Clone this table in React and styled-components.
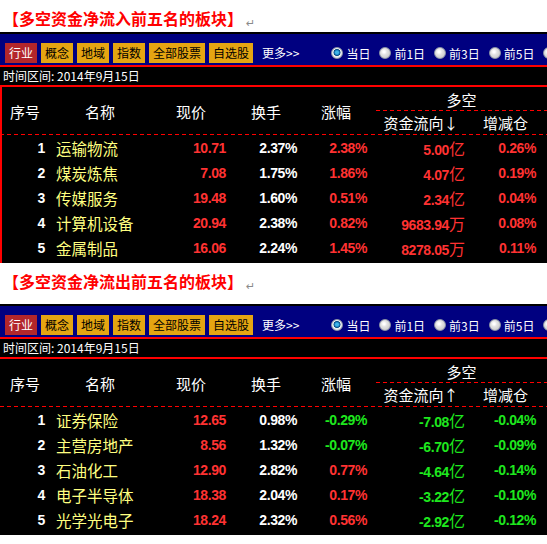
import React from "react";
import styled, { createGlobalStyle } from "styled-components";

// 行情数据
const inflow = [
  { no: 1, name: "运输物流", price: "10.71", turn: "2.37%", rise: "2.38%", flow: "5.00", unit: "亿", pos: "0.26%" },
  { no: 2, name: "煤炭炼焦", price: "7.08", turn: "1.75%", rise: "1.86%", flow: "4.07", unit: "亿", pos: "0.19%" },
  { no: 3, name: "传媒服务", price: "19.48", turn: "1.60%", rise: "0.51%", flow: "2.34", unit: "亿", pos: "0.04%" },
  { no: 4, name: "计算机设备", price: "20.94", turn: "2.38%", rise: "0.82%", flow: "9683.94", unit: "万", pos: "0.08%" },
  { no: 5, name: "金属制品", price: "16.06", turn: "2.24%", rise: "1.45%", flow: "8278.05", unit: "万", pos: "0.11%" },
];

const outflow = [
  { no: 1, name: "证券保险", price: "12.65", turn: "0.98%", rise: "-0.29%", flow: "-7.08", unit: "亿", pos: "-0.04%" },
  { no: 2, name: "主营房地产", price: "8.56", turn: "1.32%", rise: "-0.07%", flow: "-6.70", unit: "亿", pos: "-0.09%" },
  { no: 3, name: "石油化工", price: "12.90", turn: "2.82%", rise: "0.77%", flow: "-4.64", unit: "亿", pos: "-0.14%" },
  { no: 4, name: "电子半导体", price: "18.38", turn: "2.04%", rise: "0.17%", flow: "-3.22", unit: "亿", pos: "-0.10%" },
  { no: 5, name: "光学光电子", price: "18.24", turn: "2.32%", rise: "0.56%", flow: "-2.92", unit: "亿", pos: "-0.12%" },
];

const tabs = ["行业", "概念", "地域", "指数", "全部股票", "自选股"];
const ranges = ["当日", "前1日", "前3日", "前5日", "前10日"];

const tone = (v) => (v.startsWith("-") ? "down" : "up");

const Board = ({ title, rows, arrow, tall, edge }) => {
  return (
    <>
      <Title $tall={tall}>
        {title}
        <Mark>↵</Mark>
      </Title>
      <Nav>
        {tabs.map((t, idx) => (
          <Tab key={t} $active={idx === 0}>
            {t}
          </Tab>
        ))}
        <More>更多&gt;&gt;</More>
        <RadioGroup>
          {ranges.map((r, idx) => (
            <RadioLabel key={r}>
              <Radio $checked={idx === 0} />
              {r}
            </RadioLabel>
          ))}
        </RadioGroup>
      </Nav>
      <TimeRow>时间区间: 2014年9月15日</TimeRow>
      <Table $edge={edge}>
        <Head>
          <HeadCell $col="1">序号</HeadCell>
          <HeadCell $col="2">名称</HeadCell>
          <HeadCell $col="3">现价</HeadCell>
          <HeadCell $col="4">换手</HeadCell>
          <HeadCell $col="5">涨幅</HeadCell>
          <GroupCell>多空</GroupCell>
          <SubCell $col="6">资金流向{arrow}</SubCell>
          <SubCell $col="7">增减仓</SubCell>
        </Head>
        <Dash />
        <Body>
          {rows.map((r) => (
            <Row key={r.no}>
              <Num $pr={5}>{r.no}</Num>
              <Name>{r.name}</Name>
              <Num $pr={6} $tone="up">{r.price}</Num>
              <Num $pr={3}>{r.turn}</Num>
              <Num $pr={5} $tone={tone(r.rise)}>{r.rise}</Num>
              <Num $pr={5} $tone={tone(r.flow)}>
                {r.flow}
                <Unit>{r.unit}</Unit>
              </Num>
              <Num $pr={11} $tone={tone(r.pos)}>{r.pos}</Num>
            </Row>
          ))}
        </Body>
      </Table>
    </>
  );
};

const App = () => {
  return (
    <Page>
      <GlobalStyle />
      <Board title="【多空资金净流入前五名的板块】" rows={inflow} arrow="↓" edge />
      <Board title="【多空资金净流出前五名的板块】" rows={outflow} arrow="↑" tall />
    </Page>
  );
};

const GlobalStyle = createGlobalStyle`
  html, body {
    margin: 0;
    padding: 0;
    background: #ffffff;
  }
  body {
    font-family: "Noto Sans CJK SC", "Noto Sans", sans-serif;
  }
`;

const COLS = "50px 100px 82px 68px 72px 98px 77px";

const Page = styled.div`
  width: 547px;
  overflow: hidden;
`;

const Title = styled.div`
  height: ${(p) => (p.$tall ? 41 : 32)}px;
  box-sizing: border-box;
  padding: 8px 0 0 3px;
  line-height: 20px;
  font-size: 16px;
  font-weight: 700;
  color: #ff0000;
  white-space: nowrap;
`;

const Mark = styled.span`
  font-family: "DejaVu Sans", sans-serif;
  font-weight: 400;
  font-size: 11px;
  color: #8a8a8a;
  margin-left: 3px;
  vertical-align: -2px;
`;

const Nav = styled.div`
  display: flex;
  align-items: flex-end;
  gap: 4px;
  height: 29px;
  box-sizing: content-box;
  padding: 0 0 2px 5px;
  background: #000080;
  border-top: 2px solid #000000;
  border-bottom: 2px solid #ff0000;
  overflow: hidden;
  white-space: nowrap;
`;

const Tab = styled.span`
  height: 20px;
  line-height: 20px;
  padding: 0 4px;
  font-size: 12px;
  color: ${(p) => (p.$active ? "#ffffff" : "#000000")};
  background: ${(p) => (p.$active ? "#b3262b" : "#e5a512")};
  flex-shrink: 0;
`;

const More = styled.span`
  height: 20px;
  line-height: 20px;
  margin-left: 5px;
  font-size: 12px;
  color: #ffffff;
  flex-shrink: 0;
`;

const RadioGroup = styled.div`
  display: flex;
  align-items: center;
  gap: 9px;
  height: 20px;
  margin-left: 28px;
  flex-shrink: 0;
`;

const RadioLabel = styled.label`
  display: flex;
  align-items: center;
  gap: 3px;
  font-size: 12px;
  color: #ffffff;
`;

const Radio = styled.span`
  width: 12px;
  height: 12px;
  border-radius: 50%;
  box-sizing: border-box;
  border: 1px solid #8d96a8;
  background: ${(p) =>
    p.$checked
      ? "radial-gradient(circle at 50% 45%, #3fb4e8 0 1.5px, #1273b4 2.5px, #0b4d80 3.2px, #eef2f6 3.8px, #c5cbd3 100%)"
      : "radial-gradient(circle at 40% 38%, #ffffff 0 1px, #e4e4e4 3px, #bdbdbd 100%)"};
`;

const TimeRow = styled.div`
  height: 18px;
  line-height: 18px;
  padding-left: 3px;
  font-size: 12px;
  color: #ffffff;
  background: #000000;
  border-bottom: 2px solid #ff0000;
`;

const Table = styled.div`
  background: #000000;
  padding-bottom: 3px;
  box-shadow: ${(p) => (p.$edge ? "inset 2px 0 0 #ff0000" : "none")};
`;

const Head = styled.div`
  display: grid;
  grid-template-columns: ${COLS};
  grid-template-rows: 24px 23px;
  color: #ffffff;
  font-size: 15px;
`;

const HeadCell = styled.div`
  grid-column: ${(p) => p.$col};
  grid-row: 1 / 3;
  display: flex;
  align-items: center;
  justify-content: center;
  padding-top: 2px;
`;

const GroupCell = styled.div`
  grid-column: 6 / 8;
  grid-row: 1;
  display: flex;
  align-items: center;
  justify-content: center;
  margin-left: 4px;
  background: repeating-linear-gradient(to right, #ff0000 0 4px, transparent 4px 7px) bottom / 100% 1px no-repeat;
`;

const SubCell = styled.div`
  grid-column: ${(p) => p.$col};
  grid-row: 2;
  display: flex;
  align-items: center;
  justify-content: center;
  padding-right: ${(p) => (p.$col === "7" ? 6 : 0)}px;
`;

const Dash = styled.div`
  height: 1px;
  background: repeating-linear-gradient(to right, #ff0000 0 4px, transparent 4px 7px);
`;

const Body = styled.div`
  display: flex;
  flex-direction: column;
`;

const Row = styled.div`
  display: grid;
  grid-template-columns: ${COLS};
  height: 25px;
  align-items: center;
`;

const Num = styled.div`
  text-align: right;
  padding-right: ${(p) => p.$pr}px;
  font-family: "Liberation Sans", Arial, sans-serif;
  font-weight: 700;
  font-size: 14px;
  letter-spacing: -0.4px;
  white-space: nowrap;
  color: ${(p) =>
    p.$tone === "up" ? "#ff3232" : p.$tone === "down" ? "#1ee81e" : "#ffffff"};
`;

const Unit = styled.span`
  font-family: "Noto Sans CJK SC", sans-serif;
  font-weight: 400;
  font-size: 16px;
  letter-spacing: 0;
`;

const Name = styled.div`
  padding-left: 6px;
  font-size: 15.5px;
  color: #ffff80;
  white-space: nowrap;
`;

export default App;
